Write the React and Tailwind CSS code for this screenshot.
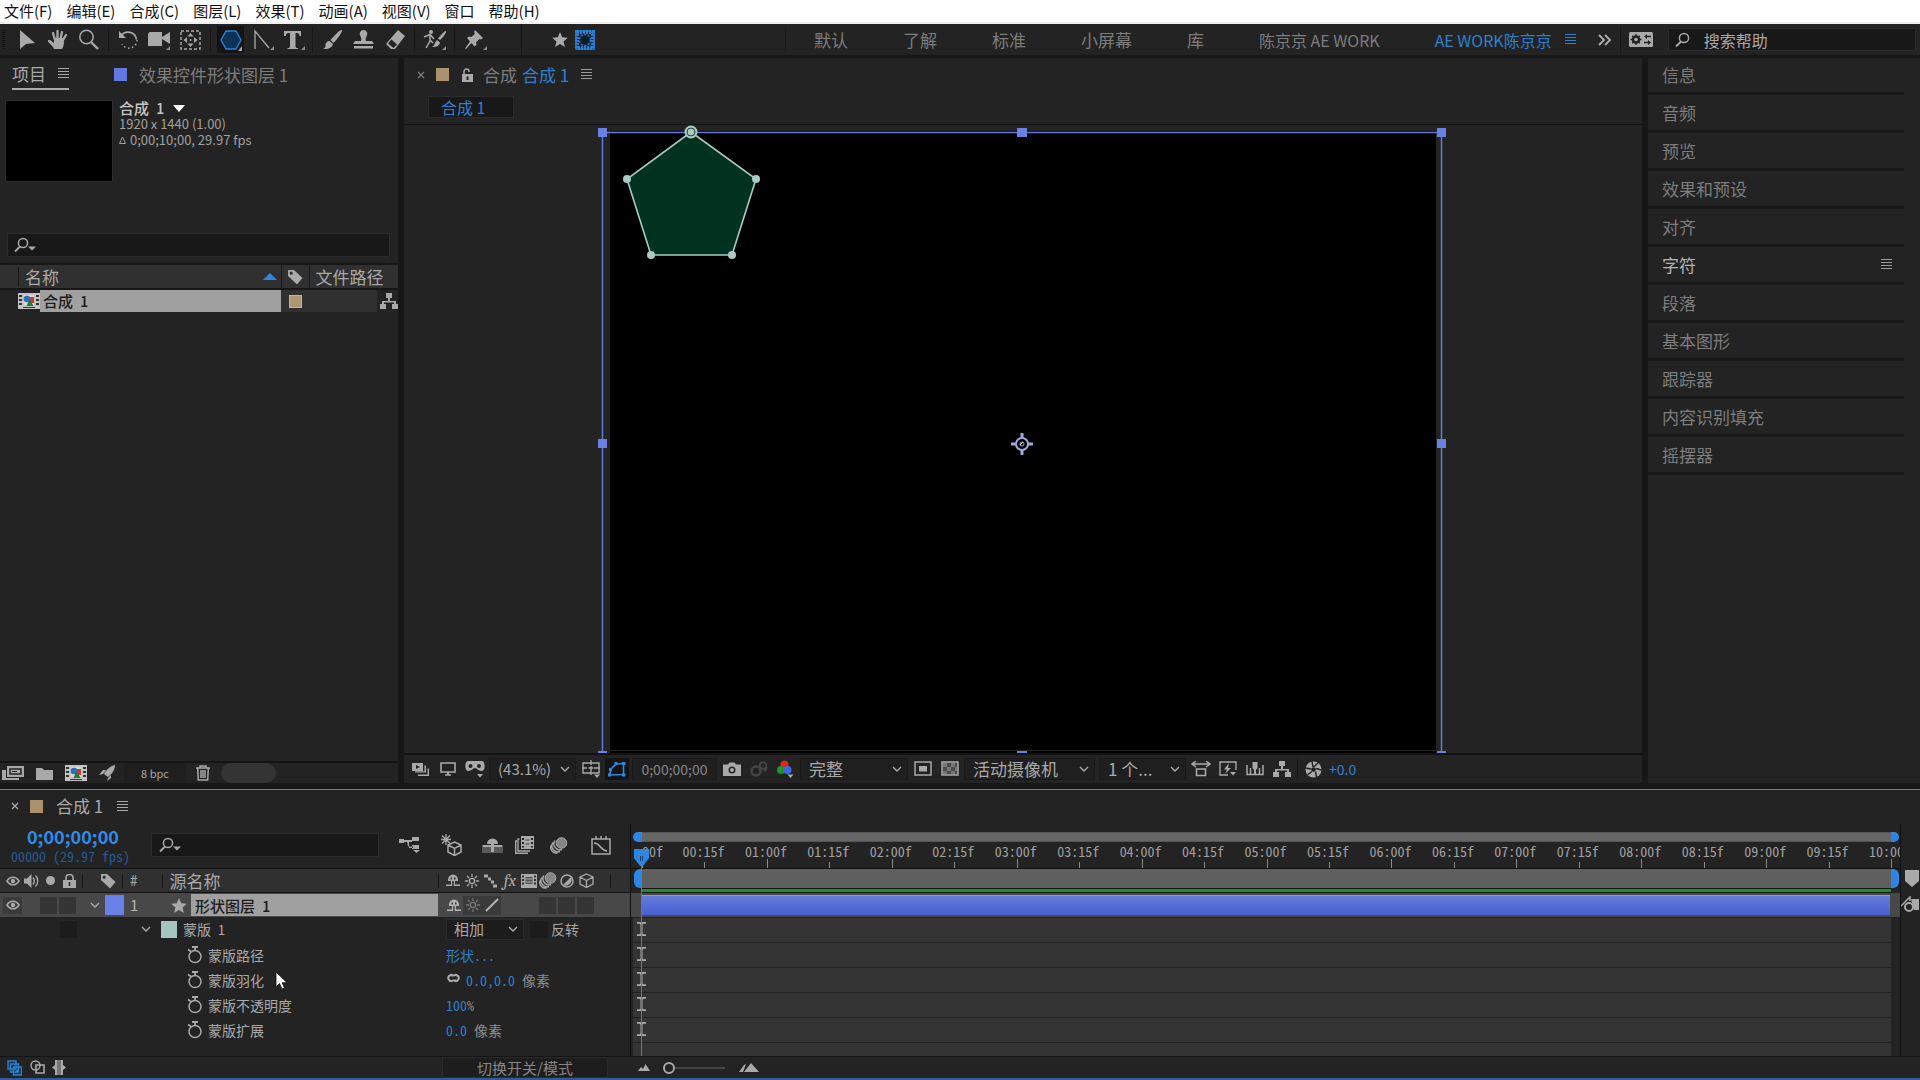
import { Fragment, useState } from 'react';

const menus = ['文件(F)', '编辑(E)', '合成(C)', '图层(L)', '效果(T)', '动画(A)', '视图(V)', '窗口', '帮助(H)'];
const workspaces = ['默认', '了解', '标准', '小屏幕', '库', '陈京京 AE WORK', 'AE WORK陈京京'];
const sidePanels = ['信息', '音频', '预览', '效果和预设', '对齐', '字符', '段落', '基本图形', '跟踪器', '内容识别填充', '摇摆器'];

const half = "[font-feature-settings:'hwid']";

const Svg = ({ w, h, children, className = '' }) => (
    <svg width={w} height={h} viewBox={`0 0 ${w} ${h}`} fill="currentColor" className={`shrink-0 ${className}`} aria-hidden="true">
        {children}
    </svg>
);

/* ---------- shared icons ---------- */

const Burger = ({ className }) => (
    <Svg w={11} h={11} className={className}><path d="M0 .5h11M0 3.500h11M0 6.500h11M0 9.500h11" stroke="currentColor" strokeWidth="1" /></Svg>
);
const Chevron = () => (
    <Svg w={10} h={7}><path d="M1 1l4 4 4-4" fill="none" stroke="currentColor" strokeWidth="1.4" /></Svg>
);
const Lens = ({ caret }) => (
    <Svg w={22} h={16}>
        <circle cx="9" cy="6" r="4.6" fill="none" stroke="currentColor" strokeWidth="1.5" />
        <path d="M6 9.5L1 14.5" stroke="currentColor" strokeWidth="1.8" />
        {caret && <path d="M14 9.500h8l-4 4z" />}
    </Svg>
);
const TagIcon = () => (
    <Svg w={16} h={16}><path fillRule="evenodd" d="M1 1h6l8.500 8-5.500 6.500L1 7zM4.200 2.600a1.600 1.600 0 100 3.200 1.600 1.600 0 000-3.200z" /></Svg>
);
const EyeIcon = () => (
    <Svg w={14} h={10}>
        <path d="M1 5c3-5 9-5 12 0-3 5-9 5-12 0z" fill="none" stroke="currentColor" strokeWidth="1.600" /><circle cx="7" cy="5" r="2.200" />
    </Svg>
);
const StarIcon = () => (
    <Svg w={16} h={15}><path d="M8 0l2.200 5.300 5.600.4-4.300 3.700 1.400 5.600L8 12l-4.900 3 1.400-5.600L.2 5.700l5.600-.4z" /></Svg>
);
const ShyIcon = () => (
    <Svg w={14} h={13}>
        <path d="M2 6a5 5.500 0 0110 0v1H9v3.500h5V12H7.800V7H6.200v5H0v-1.500h5V7H2z" /><path d="M4.500 3.500h1.500v2H4.500zM8 3.500h1.500v2H8z" fill="#303030" />
    </Svg>
);
const SunIcon = () => (
    <Svg w={14} h={14}>
        <circle cx="7" cy="7" r="2.600" fill="none" stroke="currentColor" strokeWidth="1.400" />
        <path d="M7 0v3M7 11v3M0 7h3M11 7h3M2 2l2 2M10 10l2 2M2 12l2-2M10 4l2-2" stroke="currentColor" strokeWidth="1.300" />
    </Svg>
);
const FilmIcon = () => (
    <Svg w={16} h={14}>
        <path fillRule="evenodd" d="M0 0h16v14H0zM1 1.500v2h2v-2zM1 5v2h2V5zM1 8.500v2h2v-2zM13 1.500v2h2v-2zM13 5v2h2V5zM13 8.500v2h2v-2z" />
        <path d="M4.500 3h7v7h-7z" fill="#555" /><path d="M5 5h6M5 8h6" stroke="currentColor" />
    </Svg>
);
const BlurIcon = () => (
    <Svg w={18} h={17}>
        <circle cx="11.500" cy="6" r="5.300" fill="#858585" stroke="currentColor" />
        <path d="M5 3.500a6 6 0 007 9M3 5.500a6 6 0 007 9M1.500 8a5.500 5.500 0 006 8" fill="none" stroke="currentColor" strokeWidth="1.400" />
    </Svg>
);
const CubeIcon = () => (
    <Svg w={15} h={15}><path d="M7.500 1L14 4v7l-6.500 3.500L1 11V4zM1 4l6.500 3.500L14 4M7.500 7.500v7" fill="none" stroke="currentColor" strokeWidth="1.300" /></Svg>
);
const TreeIcon = () => (
    <Svg w={18} h={17}><path d="M6 0h6v5h-2v3h6v3h2v5h-6v-5h2V9.500H4V11h2v5H0v-5h2V8h6V5H6z" /></Svg>
);
const StopWatch = () => (
    <Svg w={16} h={18}>
        <circle cx="8" cy="10.500" r="6" fill="none" stroke="currentColor" strokeWidth="1.500" />
        <path d="M5 1h6M8 1v3M1 3.500l3 2" stroke="currentColor" strokeWidth="1.800" />
    </Svg>
);
const CompIcon = () => (
    <Svg w={22} h={16}>
        <path d="M0 0h22v16H0z" fill="#c4c4c4" />
        <path d="M1 2h3v2H1zM1 6h3v2H1zM1 10h3v2H1zM18 2h3v2h-3zM18 6h3v2h-3zM18 10h3v2h-3zM5 14h12v1H5z" fill="#333" />
        <path d="M6 2h10v10H6z" fill="#d8d8d8" />
        <path d="M11 4h5v6h-5z" fill="#c33c35" /><circle cx="9" cy="6" r="3.300" fill="#2a6fc0" /><path d="M11.500 6l4 7h-7z" fill="#257b3b" />
    </Svg>
);

/* ---------- tool bar ---------- */

const corner = <path d="M22 18v4h-4z" fill="#8d8d8d" />;
const tools = [
    [
        ['选取工具', <path d="M5 2v19l6-5 9-1z" />],
        ['手形工具', <><path d="M8 21c-1-3-4.500-5.500-6-8l2-1 4 3V10h9l1 5c-.5 3-1 4.500-2 6z" /><path d="M3 13l4 4M9 12L7 5M11.500 11V3M14.500 11l1.500-7M16.500 13L20 7" fill="none" stroke="currentColor" strokeWidth="2.300" strokeLinecap="round" /></>],
        ['缩放工具', <><circle cx="9.500" cy="9" r="6.700" fill="none" stroke="currentColor" strokeWidth="1.500" /><path d="M14 14l7 7" stroke="currentColor" strokeWidth="2.400" /></>],
    ],
    [
        ['旋转工具', <><path d="M4 8a8.500 8.500 0 0115.500 3.500" fill="none" stroke="currentColor" strokeWidth="1.700" /><path d="M2 3v7h7z" /><path d="M20 12a8 8 0 01-15 4" fill="none" stroke="currentColor" strokeWidth="1.500" strokeDasharray="1.500 2.500" /></>],
        ['摄像机工具', <><path d="M0 6l1.500-2H14v5l8-5v12l-8-5v7H0z" />{corner}</>],
        ['锚点工具', <><path d="M2 3h19v18H2z" fill="none" stroke="currentColor" strokeWidth="1.500" strokeDasharray="3 2" /><path d="M11.500 5l3 3.500h-6zM11.500 19l3-3.500h-6zM4.500 12L8 9v6zM18.500 12L15 9v6z" /><circle cx="11.500" cy="12" r="1" /></>],
    ],
    [
        ['多边形工具', <><path d="M7 3h10l5 9-5 9H7l-5-9z" fill="#0d3157" stroke="#2d7fd3" strokeWidth="1.400" /><path d="M23 18v5h-4z" fill="#9ab" /></>],
        ['钢笔工具', <><path d="M5 21V3l14 17" fill="none" stroke="currentColor" strokeWidth="1.300" /><path d="M24 18v4h-4z" fill="#8d8d8d" /></>],
        ['文字工具', <><path d="M3 3h17v5h-1.500c-.3-2.500-1-3-4-3v13c0 1.500.5 2 2.500 2v1H6.500v-1c2 0 2.500-.5 2.500-2V5c-3 0-4 .5-4.300 3H3z" /><path d="M24 18v4h-4z" fill="#8d8d8d" /></>],
    ],
    [
        ['画笔工具', <><path d="M21 2c1 1-5 10-8.500 13L9.500 12C13 8 19 1 21 2z" /><path d="M8.500 13l3.500 3c-1 4-5 5.500-10 5 2-1 2.500-2 2.500-3.500C4.600 14 7 13 8.500 13z" /></>],
        ['仿制图章工具', <path d="M11.500 2a4 4 0 013 6.500c-1 1.500-1 3-.5 4.500h6l2 3H1l2-3h6c.5-1.500.5-3-.5-4.500A4 4 0 0111.500 2zM2 18h19v2.500H2z" />],
        ['橡皮擦工具', <><path d="M15 2l7 6-10 13H8l-5-5z" /><path d="M5 15.500l3.500-4 5.500 5L10.500 20z" fill="#232323" /></>],
    ],
    [
        ['Roto 笔刷工具', <><circle cx="8" cy="4" r="2" /><path d="M1 9l6-2.500 4 4.500M7 7v6l-4 7M7 12l3 3" fill="none" stroke="currentColor" strokeWidth="1.500" /><path d="M23 3c1 .6-3 7-6 9l-2-1.500C17 8 22 2 23 3zM14 12l3 2.500c-1 4-4 5-8 4.500 1.500-1 2.500-2 2.800-4z" /><path d="M23 18v4h-4z" fill="#8d8d8d" /></>],
    ],
    [
        ['人偶位控点工具', <><path d="M12 2l8 8-2 1.500-1.500-.5-3.500 3.500.5 2.500-2 1.500L8.500 15 3 21l-1-.5 5-7L4 10l2-1.500 2.500.5L12 5.500 11 4z" /><path d="M24 18v4h-4z" fill="#8d8d8d" /></>],
    ],
];

const ToolBar = () => (
    <div className="flex h-[34px] items-center border-b-[3px] border-[#171717] bg-[#232323] text-[#a9a9a9]">
        <Svg w={3} h={20} className="ml-[2px] text-[#131313]"><path d="M1.500 0v20" stroke="currentColor" strokeWidth="3" strokeDasharray="1 1" /></Svg>
        <div className="flex items-center pl-[6px]">
            {tools.map((group, gi) => (
                <Fragment key={gi}>
                    {gi > 0 && <span className="mx-1 h-[25px] w-px bg-[#181818]" />}
                    {group.map(([label, icon]) => (
                        <button
                            key={label}
                            type="button"
                            aria-label={label}
                            className={label === '多边形工具' ? 'flex h-[27px] w-[31px] items-center justify-center border-x-2 border-[#232323] bg-[#141414]' : 'flex h-[27px] w-[31px] items-center justify-center'}
                        >
                            <Svg w={24} h={24}>{icon}</Svg>
                        </button>
                    ))}
                </Fragment>
            ))}
        </div>
        <span className="ml-[31px] mr-[25px] h-[31px] w-px bg-[#181818]" />
        <button type="button" aria-label="工具创建形状" className="flex w-[26px] justify-center"><StarIcon /></button>
        <button type="button" aria-label="工具创建蒙版" className="flex w-[23px] justify-center">
            <Svg w={20} h={20}>
                <path d="M0 0h20v20H0z" fill="#0b2238" />
                <path d="M2 2h16v16H2z" fill="none" stroke="#2d7fd3" strokeWidth="4" strokeDasharray="2 1" />
                <path d="M1 1h18v18H1z" fill="none" stroke="#2d7fd3" strokeWidth="1.500" />
                <circle cx="10" cy="10" r="5.500" fill="#101c28" stroke="#2d7fd3" strokeWidth="1.500" strokeDasharray="2 1.500" />
            </Svg>
        </button>
        <span className="ml-[189px] h-[25px] w-px bg-[#1b1b1b]" />
        <nav className="flex items-center gap-[55px] whitespace-nowrap pl-7 text-[17px] text-[#7d7d7d]">
            {workspaces.map((name, i) => (
                <a key={name} href="#" className={i === 6 ? 'text-base text-[#2f80cf]' : i === 5 ? 'text-base' : ''}>{name}</a>
            ))}
        </nav>
        <Burger className="ml-[13px] text-[#2f80cf]" />
        <Svg w={14} h={12} className="ml-[22px]"><path d="M1 1l5 5-5 5M7 1l5 5-5 5" fill="none" stroke="currentColor" strokeWidth="2" /></Svg>
        <span className="mx-2 h-[28px] w-px bg-[#181818]" />
        <button type="button" aria-label="同步设置">
            <Svg w={24} h={15}>
                <rect width="24" height="15" rx="1.500" />
                <circle cx="7" cy="7.500" r="3.200" fill="none" stroke="#222" strokeWidth="2.200" />
                <path d="M7 2v11M1.500 7.500h11M3.200 3.700l7.600 7.600M3.200 11.300l7.600-7.600" stroke="#222" strokeWidth="1.300" /><circle cx="7" cy="7.500" r="1.800" />
                <path d="M15 4.500l3-2.500v1.700h4v1.600h-4V7zM22 10.500L19 8v1.700h-4v1.600h4V13z" fill="#222" />
            </Svg>
        </button>
        <label className="ml-[15px] mr-1 flex h-[23px] min-w-0 flex-1 items-center border border-[#2b2b2b] bg-[#181818] pl-[6px]">
            <Lens />
            <input type="text" aria-label="搜索帮助" placeholder="搜索帮助" className="ml-[7px] w-full min-w-0 bg-transparent text-base leading-5 outline-none placeholder:text-[#a9a9a9]" />
        </label>
    </div>
);

/* ---------- project panel ---------- */

const Swatch = ({ className }) => <span className={`h-[13px] w-[13px] shrink-0 ${className}`} />;

const ProjectPanel = () => (
    <section className="flex w-[398px] shrink-0 flex-col bg-[#232323]">
        <div className="flex h-8 items-stretch pl-3 text-[17px] leading-[33px]">
            <button type="button" className="flex items-center gap-3 border-b-2 border-[#a9a9a9] text-[#a9a9a9]">项目 <Burger /></button>
            <button type="button" className="ml-[45px] flex items-center text-[#7d7d7d]"><Swatch className="mr-3 bg-[#6179e0]" />效果控件形状图层 1</button>
        </div>
        <div className="flex h-[143px] gap-[6px] pl-[5px] pt-[10px]">
            <div className="h-[82px] w-[108px] border border-[#2e2e2e] bg-black" />
            <div className="text-[13px] leading-4 text-[#a0a0a0]">
                <div className={`flex h-4 items-center gap-[9px] text-[15px] font-medium leading-4 text-[#c4c4c4] ${half}`}>
                    合成 1 <Svg w={12} h={7} className="text-white"><path d="M0 0h12L6 7z" /></Svg>
                </div>
                <div>1920 x 1440 (1.00)</div>
                <div className="flex items-center gap-1">
                    <Svg w={7} h={8}><path d="M3.500 1L6.500 7.500h-6z" fill="none" stroke="currentColor" /></Svg>0;00;10;00, 29.97 fps
                </div>
            </div>
        </div>
        <label className="ml-[7px] mr-2 flex h-6 items-center border border-[#2c2c2c] bg-[#181818] pl-[6px] text-[#a9a9a9]">
            <Lens caret />
            <input type="text" aria-label="搜索项目" className="w-full bg-transparent outline-none" />
        </label>
        <table className="mt-[6px] w-full table-fixed border-collapse text-left">
            <thead>
                <tr className="h-[25px] border-y-2 border-[#171717] bg-[#303030] text-[17px] leading-5 text-[#a9a9a9]">
                    <th className="w-[281px] border-r border-[#181818] p-0 font-normal">
                        <div className="ml-[18px] flex items-center justify-between border-l border-[#181818] pl-[6px] pr-1">
                            名称 <Svg w={14} h={7} className="text-[#2d87e2]"><path d="M0 7h14L7 0z" /></Svg>
                        </div>
                    </th>
                    <th className="w-[28px] border-r border-[#181818] p-0"><span className="flex justify-center"><TagIcon /></span></th>
                    <th className="p-0 pl-[6px] font-normal">文件路径</th>
                </tr>
            </thead>
            <tbody>
                <tr className="h-[22px]">
                    <td className="p-0">
                        <div className="flex h-[22px] items-center pl-[18px]">
                            <CompIcon />
                            <span className={`h-[22px] flex-1 bg-[#a0a0a0] pl-[3px] text-[15px] font-medium leading-[22px] text-[#1d1d1d] ${half}`}>合成 1</span>
                        </div>
                    </td>
                    <td className="bg-[#303030] p-0"><Swatch className="mx-auto block border border-[#c5b48c] bg-[#ab9775]" /></td>
                    <td className="p-0 text-[#a9a9a9]">
                        <div className="flex h-[22px] items-center gap-[3px]"><span className="h-[22px] flex-1 bg-[#303030]" /><TreeIcon /></div>
                    </td>
                </tr>
            </tbody>
        </table>
        <div className="mt-auto flex h-[22px] items-center border-t-2 border-[#151515] pl-px text-[#a9a9a9]">
            <button type="button" aria-label="解释素材"><Svg w={23} h={15}><path d="M6 0h17v11H6zM1 4h4v8h13v2H1z" /><path d="M9 3h11v5H9z" fill="none" stroke="#232323" strokeWidth="1.500" /><path d="M11 5.500h5" stroke="#232323" /></Svg></button>
            <button type="button" aria-label="新建文件夹" className="ml-3"><Svg w={17} h={13}><path d="M0 1h6l2 2h9v10H0z" /></Svg></button>
            <button type="button" aria-label="新建合成" className="ml-3"><CompIcon /></button>
            <button type="button" aria-label="项目设置" className="ml-3"><Svg w={17} h={16}><path d="M16 0c0 5-3 9-7 12l-4-3C7 5 11 1 16 0zM4 9l-4 1 4-5h3zM9 13l-1 3 4-3v-3z" /></Svg></button>
            <button type="button" className="ml-2 h-5 w-[62px] bg-[#1f1f1f] text-center text-[11px] leading-5">8 bpc</button>
            <button type="button" aria-label="删除" className="ml-[10px]"><Svg w={14} h={16}><path d="M0 3h14M4 3V1h6v2M1.700 3l.6 12h9.400l.6-12M5 5v8M7 5v8M9 5v8" fill="none" stroke="currentColor" strokeWidth="1.500" /></Svg></button>
            <span className="ml-[11px] h-5 w-[55px] rounded-full bg-[#343434]" />
        </div>
    </section>
);

/* ---------- composition viewer ---------- */

const Viewer = () => (
    <div className="flex min-h-0 flex-1 justify-center overflow-hidden border-b-2 border-[#121212] bg-[#232323]">
        <svg width="860" height="960" viewBox="593 125 860 960" className="shrink-0" role="img" aria-label="合成 1">
            <path d="M610 131h826v700H610z" fill="#000" />
            <path d="M602.500 132.500H1441.500V760H602.500z" fill="none" stroke="#6179d8" strokeWidth="1.500" />
            <path d="M691 132l65 47-24 76h-81l-24-76z" fill="#00331f" stroke="#a9cbc3" strokeWidth="1.600" />
            <g fill="#a9cbc3">
                <circle cx="756" cy="179" r="4" /><circle cx="732" cy="255" r="4" /><circle cx="651" cy="255" r="4" /><circle cx="627" cy="179" r="4" />
                <circle cx="691" cy="132" r="6.500" /><circle cx="691" cy="132" r="4" stroke="#27413c" />
            </g>
            <g fill="#6a80e2">
                <path d="M598 128h9v9h-9zM1017 128h10v9h-10zM1437 128h9v9h-9zM598 439h9v9h-9zM1437 439h9v9h-9z" />
                <path d="M598 751h9v9h-9zM1017 751h10v9h-10zM1437 751h9v9h-9z" />
            </g>
            <path d="M610 750.500h826" stroke="#232323" strokeWidth="1" />
            <g stroke="#a5a7dc" fill="none">
                <circle cx="1022" cy="444" r="6" strokeWidth="2" /><circle cx="1022" cy="444" r="2" strokeWidth="1" />
                <path d="M1022 433v6M1022 449v6M1011 444h6M1027 444h6" strokeWidth="3" />
            </g>
            <path d="M1020 445l3-3" stroke="#ddd" />
        </svg>
    </div>
);

const FootBtn = ({ label, children }) => (
    <button type="button" aria-label={label} className="flex w-[27px] shrink-0 items-center justify-center">{children}</button>
);
const FootSelect = ({ label, value, className }) => (
    <div className={`relative mx-px flex h-[22px] shrink-0 items-center border border-[#191919] bg-[#1f1f1f] ${className}`}>
        <select aria-label={label} className="h-full w-full appearance-none pl-2 leading-5 outline-none"><option>{value}</option></select>
        <span className="pointer-events-none absolute right-[5px]"><Chevron /></span>
    </div>
);

const CompPanel = () => (
    <section className="flex min-w-0 flex-1 flex-col bg-[#232323]">
        <div className="flex h-8 items-center pl-[13px] pt-px text-[17px] text-[#7d7d7d]">
            <Svg w={8} h={8}><path d="M1 1l6 6M7 1L1 7" stroke="currentColor" strokeWidth="1.300" /></Svg>
            <Swatch className="ml-[11px] bg-[#a9936f]" />
            <Svg w={13} h={14} className="ml-3 text-[#a9a9a9]"><path fillRule="evenodd" d="M1 6h11v8H1zM5.500 8.500h2V12h-2z" /><path d="M3 6V3.500a2.500 2.500 0 015 0V4" fill="none" stroke="currentColor" strokeWidth="1.500" /></Svg>
            <span className="ml-[9px]">合成</span>
            <a href="#" className="ml-[5px] text-[#2f80cf]">合成 1</a>
            <Burger className="ml-3 text-[#9a9a9a]" />
        </div>
        <div className="flex h-[35px] items-center border-b border-[#121212] pl-6">
            <button type="button" className="h-[22px] w-[86px] border border-[#2b2b2b] bg-[#181818] pl-3 text-left text-base leading-5 text-[#2f80cf]">合成 1</button>
        </div>
        <Viewer />
        <div className="flex h-7 items-center overflow-hidden pl-[3px] text-[#a9a9a9]">
            <FootBtn label="始终预览此视图"><Svg w={17} h={14}><path fillRule="evenodd" d="M0 1h11v8H0zM4 3v4l4-2zM12.500 3.500h1.500v7H3v-1.300h9.500zM15.500 6.500H17V14H6v-1.500h9.500z" /></Svg></FootBtn>
            <FootBtn label="主查看器"><Svg w={16} h={14}><path d="M1 1h14v9H1zM5 13h6" fill="none" stroke="currentColor" strokeWidth="1.600" /><path d="M7 10h2v3H7z" /></Svg></FootBtn>
            <FootBtn label="切换 3D 视图"><Svg w={20} h={18}><path fillRule="evenodd" d="M3 1h14c3 0 4 9 0 10-4 0-5-3-7-3s-3 3-7 3C-1 10 0 1 3 1zM5.500 4a2 2 0 100 4 2 2 0 000-4zM14 4a2 2 0 100 4 2 2 0 000-4zM12 14h6l-3 3.500z" /></Svg></FootBtn>
            <FootSelect label="放大率" value="(43.1%)" className="w-[87px] text-[15px]" />
            <FootBtn label="网格和参考线"><Svg w={18} h={18}><path d="M1 3h16v10H1z" fill="none" stroke="currentColor" strokeWidth="1.400" /><path d="M9 0v5M9 10v5M0 8h5M12 8h6M6.500 8h5M9 6v4" stroke="currentColor" strokeWidth="1.300" /><path d="M12 14.500h6l-3 3.500z" /></Svg></FootBtn>
            <button type="button" aria-label="切换蒙版路径可见性" className="ml-px mr-[3px] flex h-[22px] w-6 shrink-0 items-center justify-center bg-[#141414] text-[#2f86df]">
                <Svg w={18} h={16}><path d="M1.500 14L3 8l5-5 7.500-.5v11z" fill="none" stroke="currentColor" strokeWidth="1.600" /><path d="M0 12.500h3v3H0zM14 12.500h3.500v3H14zM14 1h3.500v3H14zM6.500 1h3v3h-3zM1 7h3v3H1z" /></Svg>
            </button>
            <button type="button" className="mr-px h-[22px] w-[85px] shrink-0 border border-[#191919] bg-[#1f1f1f] text-center text-sm leading-5 text-[#868686]">0;00;00;00</button>
            <FootBtn label="拍摄快照"><Svg w={18} h={14}><path fillRule="evenodd" d="M0 2.500h5l1.500-2h5l1.500 2h5V14H0zM9 4.500a3.500 3.500 0 100 7 3.500 3.500 0 000-7z" /><circle cx="9" cy="8" r="2" /></Svg></FootBtn>
            <FootBtn label="显示快照"><Svg w={20} h={16} className="text-[#454545]"><circle cx="7" cy="10" r="4.500" fill="none" stroke="currentColor" strokeWidth="2.500" /><circle cx="14" cy="4.500" r="3.300" fill="none" stroke="currentColor" strokeWidth="2" /><path d="M14 9l5-3-2 5z" /></Svg></FootBtn>
            <FootBtn label="显示通道"><Svg w={17} h={18}><circle cx="7.500" cy="4.500" r="4" fill="#de2520" /><circle cx="4" cy="10" r="4" fill="#1f961f" /><circle cx="10.500" cy="10" r="4" fill="#3a6ce0" /><path d="M10.500 14.500h6l-3 3.500z" /></Svg></FootBtn>
            <FootSelect label="分辨率" value="完整" className="w-[108px] text-[17px]" />
            <FootBtn label="目标区域"><Svg w={18} h={16}><path d="M1 1h16v13H1z" fill="none" stroke="currentColor" strokeWidth="1.500" /><path d="M5 5h8v5.500H5z" /></Svg></FootBtn>
            <FootBtn label="切换透明网格"><Svg w={18} h={16}><path d="M1 1h16v13H1z" fill="#4a4a4a" stroke="currentColor" strokeWidth="1.500" /><path d="M2 2h4v4H2zM10 2h4v4h-4zM6 6h4v4H6zM14 6h2v4h-2zM2 10h4v3H2zM10 10h4v3h-4z" fill="#777" /></Svg></FootBtn>
            <FootSelect label="3D 视图" value="活动摄像机" className="w-[131px] text-[17px]" />
            <span className="w-[2px]" />
            <FootSelect label="视图布局" value="1 个..." className="w-[87px] text-[17px]" />
            <FootBtn label="像素长宽比校正"><Svg w={20} h={16}><path d="M2 3h16M5 0L1 3l4 3M15 0l4 3-4 3" fill="none" stroke="currentColor" strokeWidth="1.500" /><path d="M5.500 8h9v6.500h-9z" fill="none" stroke="currentColor" strokeWidth="1.600" /></Svg></FootBtn>
            <FootBtn label="快速预览"><Svg w={18} h={17}><path d="M17 9V1H1v13h8" fill="none" stroke="currentColor" strokeWidth="1.400" /><path d="M10 2L5 8.500h3L6 13l6-6H9zM11 11h6l-3 3.500z" /></Svg></FootBtn>
            <FootBtn label="时间轴"><Svg w={18} h={14}><path d="M1 3v9.500h16V3M4.500 6v6M13.500 6v6" fill="none" stroke="currentColor" strokeWidth="1.500" /><path d="M6.500 0h5v6l-1.500 2v4H8V8L6.500 6z" /></Svg></FootBtn>
            <FootBtn label="合成流程图"><TreeIcon /></FootBtn>
            <span className="mx-[2px] h-[22px] w-px bg-[#1a1a1a]" />
            <FootBtn label="重置曝光度"><Svg w={17} h={17}><circle cx="8.500" cy="8.500" r="8" /><circle cx="8.500" cy="8.500" r="2.300" fill="#232323" /><path d="M8.500 6L13 2M11 7.500l5.500 1.500M10.500 10.500l1 5.500M7 10.500L2.500 14M6 8L.5 7M8 6L7 .5" stroke="#232323" strokeWidth="1.400" /></Svg></FootBtn>
            <a href="#" className="ml-[2px] text-sm text-[#2f80cf]">+0.0</a>
        </div>
    </section>
);

const SidePanels = () => (
    <aside className="w-[272px] shrink-0 bg-[#232323] pr-4">
        {sidePanels.map((name, i) => (
            <button
                key={name}
                type="button"
                className={`flex w-full items-center justify-between border-b-[3px] border-[#171717] pl-[14px] pr-3 text-[17px] ${i === 0 ? 'h-[37px]' : 'h-[38px]'} ${name === '字符' ? 'text-[#b4b4b4]' : 'text-[#7d7d7d]'}`}
            >
                {name}
                {name === '字符' && <Burger className="text-[#9a9a9a]" />}
            </button>
        ))}
    </aside>
);

/* ---------- timeline ---------- */

const Cell = ({ children, className = '' }) => <span className={`flex w-[19px] shrink-0 justify-center ${className}`}>{children}</span>;
const Sep = ({ className }) => <span className={`h-[14px] w-px shrink-0 bg-[#161616] ${className}`} />;
const Box = ({ dark }) => <span className={dark ? 'mr-[2px] h-[17px] w-[17px] shrink-0 bg-[#1c1c1c]' : 'mr-[2px] h-[17px] w-[17px] shrink-0 bg-[#353535]'} />;

const properties = [
    { name: '蒙版路径', value: '形状...' },
    { name: '蒙版羽化', value: '0.0,0.0', unit: ' 像素', linked: true },
    { name: '蒙版不透明度', value: '100', unit: '%' },
    { name: '蒙版扩展', value: '0.0', unit: ' 像素' },
];

const LayerHeader = () => (
    <div className="flex h-[25px] items-center border-y border-[#121212] bg-[#303030] pl-[3px] text-[#a9a9a9]">
        <Cell><EyeIcon /></Cell>
        <Cell><Svg w={15} h={14}><path d="M0 4.500h3L7.500 0v14L3 9.500H0z" /><path d="M9 3.500c1.500 2 1.500 5 0 7M11.500 1.500c3 3 3 8 0 11" fill="none" stroke="currentColor" strokeWidth="1.400" /></Svg></Cell>
        <Cell><Svg w={9} h={9}><circle cx="4.500" cy="4.500" r="4.500" /></Svg></Cell>
        <Cell><Svg w={13} h={14}><path fillRule="evenodd" d="M0 6h13v8H0zM5.700 8v4h1.600V8z" /><path d="M3 6V3.500a3.500 3 0 017 0V6" fill="none" stroke="currentColor" strokeWidth="1.600" /></Svg></Cell>
        <Sep className="ml-[3px]" />
        <span className="ml-[17px]"><TagIcon /></span>
        <Sep className="ml-[6px]" />
        <span className={`ml-[7px] text-[15px] ${half}`}>#</span>
        <Sep className="ml-[24px]" />
        <span className="w-[275px] pl-[7px] text-[17px] leading-5">源名称</span>
        <Sep className="mr-[5px]" />
        <Cell><ShyIcon /></Cell>
        <Cell><SunIcon /></Cell>
        <Cell><Svg w={14} h={14}><path d="M0 2h4M4 5h3M7 8h3M9 12h4" stroke="currentColor" strokeWidth="3" /></Svg></Cell>
        <Cell><span className="font-serif text-[17px] italic leading-5">fx</span></Cell>
        <Cell><FilmIcon /></Cell>
        <Cell><BlurIcon /></Cell>
        <Cell><Svg w={14} h={14}><circle cx="7" cy="7" r="6" fill="none" stroke="currentColor" strokeWidth="1.500" /><path d="M11 3a6 6 0 01-8 8z" /></Svg></Cell>
        <Cell><CubeIcon /></Cell>
        <Sep className="ml-[14px]" />
    </div>
);

const LayerRow = () => (
    <div className="flex h-6 items-center bg-[#484848] pl-[3px] text-[#a9a9a9]">
        <Cell className="h-[17px] items-center bg-[#3a3a3a]"><EyeIcon /></Cell>
        <span className="w-[18px]" /><Box /><Box />
        <span className="ml-3"><Chevron /></span>
        <span className="ml-[5px] h-5 w-[19px] bg-[#6880e8]" />
        <span className="w-[47px] pl-[6px] text-[15px] text-[#b5b5b5]">1</span>
        <StarIcon />
        <span className={`ml-1 h-[22px] w-[247px] bg-[#a0a0a0] pl-1 text-[15px] font-medium leading-[23px] text-[#1d1d1d] ${half}`}>形状图层 1</span>
        <span className="w-[6px]" />
        <Cell className="h-[19px] items-center text-[#b5b5b5]"><ShyIcon /></Cell>
        <Cell className="h-[19px] items-center bg-[#3a3a3a] text-[#777]"><SunIcon /></Cell>
        <Cell className="h-[19px] items-center bg-[#3a3a3a] text-[#b5b5b5]"><Svg w={14} h={14}><path d="M1 13L13 1" stroke="currentColor" strokeWidth="2" /></Svg></Cell>
        <span className="w-[38px]" /><Box /><Box /><Box />
    </div>
);

const MaskRow = () => {
    const [inverted, setInverted] = useState(false);

    return (
        <div className={`flex h-[25px] items-center pb-px text-sm text-[#a9a9a9] ${half}`}>
            <span className="w-[60px]" /><Box dark />
            <span className="ml-[62px]"><Chevron /></span>
            <span className="ml-[10px] h-[17px] w-4 bg-[#a6c5c0]" />
            <span className="w-[269px] pl-[6px]">蒙版 1</span>
            <div className="relative flex h-[21px] w-[78px] items-center border border-[#2b2b2b] bg-[#1c1c1c]">
                <select aria-label="蒙版模式" className="w-full appearance-none pl-[7px] text-[15px] leading-[18px] outline-none"><option>相加</option></select>
                <span className="pointer-events-none absolute right-[5px]"><Chevron /></span>
            </div>
            <label className="ml-[6px] flex items-center gap-[3px]">
                <input
                    type="checkbox"
                    checked={inverted}
                    onChange={(e) => setInverted(e.target.checked)}
                    className="h-[17px] w-[18px] appearance-none bg-[#1c1c1c] checked:bg-[#a9a9a9]"
                />
                反转
            </label>
        </div>
    );
};

const PropertyRow = ({ name, value, unit, linked }) => (
    <div className={`relative flex h-[25px] items-center whitespace-pre pl-[187px] text-sm text-[#a9a9a9] ${half}`}>
        <button type="button" aria-label={`${name} 秒表`}><StopWatch /></button>
        <span className="w-[243px] pl-[5px]">{name}</span>
        {linked && (
            <Svg w={15} h={10} className="mb-1 mr-[5px]"><path d="M7 2.500a3 3 0 100 5h3M8 7.500a3 3 0 100-5H5" fill="none" stroke="currentColor" strokeWidth="2" /></Svg>
        )}
        <a href="#" className="text-[#2f80cf]">{value}</a>
        <span className="text-[#8d8d8d]">{unit}</span>
        {linked && (
            <Svg w={14} h={21} className="absolute left-[275px] top-[4px]"><path d="M1 1v15l3.500-3.500L7 18l2.500-1-2.400-5.300H12z" fill="#fff" stroke="#111" strokeWidth=".8" /></Svg>
        )}
    </div>
);

const times = Array.from({ length: 21 }, (_, i) => {
    const sec = String(Math.floor(i / 2)).padStart(2, '0');
    return i === 0 ? '00f' : `${sec}:${i % 2 ? '15' : '00'}f`;
});

const Ruler = () => (
    <div className="flex h-[26px] overflow-hidden pl-[11px] pr-[9px]">
        {times.map((time, i) => (
            <div key={time} className={`flex flex-col ${i === 20 ? 'w-0' : 'min-w-0 flex-1'}`}>
                <span className={`h-4 whitespace-nowrap text-sm leading-[18px] text-[#a0a0a0] ${half} ${i === 0 ? '' : '-ml-[22px]'}`}>{time}</span>
                <span className={`mt-auto w-px bg-[#8a8a8a] ${i % 2 ? 'h-[6px]' : 'h-[9px]'}`} />
            </div>
        ))}
    </div>
);

const Tracks = () => (
    <div className="relative flex min-w-0 flex-1 flex-col border-l border-[#111]">
        <div className="mt-2 flex h-[10px] pl-[2px]">
            <span className="w-[9px] rounded-l-full bg-[#2d87e2]" />
            <span className="flex-1 border-y border-[#555] bg-[#666]" />
            <span className="w-2 rounded-r-full bg-[#2d87e2]" />
            <span className="w-px" />
        </div>
        <Ruler />
        <div className="flex h-5 border-t border-[#0f0f0f] pl-[3px]">
            <span className="w-2 rounded-l-md bg-[#2d87e2]" />
            <span className="flex-1 bg-[#5f5f5f]" />
            <span className="w-2 rounded-r-md bg-[#2d87e2]" />
            <span className="w-px" />
        </div>
        <div className="ml-[11px] mr-[9px] h-[5px] border-y border-[#0f160f] bg-[#24883a]" />
        <div className="h-6 bg-[#484848] py-[2px] pl-[11px] pr-[10px]">
            <div className="h-full border-t border-[#8c99d2] bg-gradient-to-b from-[#667cd8] to-[#4560d0]" />
        </div>
        <div className="ml-[2px] mr-[9px] flex flex-1 flex-col bg-[#343434]">
            {['mask', ...properties.map((p) => p.name)].map((id) => (
                <div key={id} className="flex h-[25px] items-center border-t border-[#212121] pb-[3px] pl-1 text-[#a9a9a9]">
                    <Svg w={9} h={14}><path d="M0 .8h3l1.500 1.500L6 .8h3M0 13.200h3l1.500-1.500L6 13.200h3M4.500 2v10" fill="none" stroke="currentColor" strokeWidth="2" /></Svg>
                </div>
            ))}
            <div className="h-[14px] border-t border-[#212121]" />
        </div>
        {/* current time indicator */}
        <div className="absolute bottom-0 left-[3px] top-[25px] flex w-[15px] flex-col items-center">
            <Svg w={15} h={17} className="text-[#2d87e2]"><path d="M0 0h15v9l-6 8H6L0 9z" /><path d="M6.500 7v5M8.500 7v5" stroke="#15406e" /></Svg>
            <span className="w-px flex-1 bg-[#2d87e2]" />
        </div>
    </div>
);

const Timeline = () => (
    <section className="shrink-0 border-t border-b-2 border-t-[#4a80c4] border-b-[#2c5c9c] bg-[#232323]">
        <div className="flex h-[34px] items-center pb-[2px] pl-[11px] text-[17px] text-[#a9a9a9]">
            <Svg w={8} h={8}><path d="M1 1l6 6M7 1L1 7" stroke="currentColor" strokeWidth="1.300" /></Svg>
            <Swatch className="ml-[11px] bg-[#a9936f]" />
            <span className="ml-[13px]">合成 1</span>
            <Burger className="ml-[14px]" />
        </div>
        <div className="flex">
            <div className="w-[630px] shrink-0">
                <div className="flex h-[44px] items-start text-[#a9a9a9]">
                    <div className="w-[151px] pl-[11px]">
                        <div className="pl-4 pt-px text-[18px] font-bold leading-[22px] text-[#2f8cea]">0;00;00;00</div>
                        <div className={`text-sm leading-[18px] text-[#235b93] ${half}`}>00000 (29.97 fps)</div>
                    </div>
                    <label className="mt-[9px] flex h-6 w-[228px] items-center border border-[#2c2c2c] bg-[#181818] pl-[7px]">
                        <Lens caret />
                        <input type="text" aria-label="搜索图层" className="w-full min-w-0 bg-transparent outline-none" />
                    </label>
                    <div className="mt-[9px] flex h-6 items-center pl-5">
                        <button type="button" aria-label="合成微型流程图"><Svg w={21} h={16}><path d="M0 2h5v4H0zM13 0h7v4h-7zM13 8h7v4h-7zM14 13h7l-3.500 3zM5 3h8v2H5zM8 4h2v7h4V9.500H9z" /></Svg></button>
                        <button type="button" aria-label="草图 3D" className="ml-5"><Svg w={22} h={22}><path d="M6 0v11M1 5.500h10M2 1.500l8 8M10 1.500l-8 8" stroke="currentColor" strokeWidth="1.300" /><path d="M14.500 8l6.500 3v7l-6.500 3.500L8 18v-7zM8 11l6.500 3.500L21 11M14.500 14.500v7" fill="none" stroke="currentColor" strokeWidth="1.500" /></Svg></button>
                        <button type="button" aria-label="隐藏图层" className="ml-5"><Svg w={21} h={16}><path d="M0 8h21v8H0z" fill="#5a5a5a" /><path d="M5 7a5.500 5.500 0 0111 0zM9 7h3v8H9zM4 8h4v1H4zM1 8h19v2H1z" /></Svg></button>
                        <button type="button" aria-label="帧混合" className="ml-3"><Svg w={19} h={18}><path fillRule="evenodd" d="M6 0h13v13H6zM7 2v2h2V2zM7 6v2h2V6zM7 10v1.500h2V10zM16 2v2h2V2zM16 6v2h2V6zM16 10v1.500h2V10z" /><path d="M4.500 3H3v12h12M2 5H.700v12.300H13" fill="none" stroke="currentColor" strokeWidth="1.400" /><path d="M10.500 4h4M10.500 8h4" stroke="#444" /></Svg></button>
                        <button type="button" aria-label="运动模糊" className="ml-4"><BlurIcon /></button>
                        <button type="button" aria-label="图表编辑器" className="ml-[23px]"><Svg w={20} h={19}><path d="M1 3h18v15H1zM5 0v3M10 0v3M15 0v3" fill="none" stroke="currentColor" strokeWidth="1.500" /><path d="M3 7c7 0 5 7 13 8" fill="none" stroke="currentColor" strokeWidth="1.600" /></Svg></button>
                    </div>
                </div>
                <LayerHeader />
                <LayerRow />
                <MaskRow />
                {properties.map((p) => <PropertyRow key={p.name} {...p} />)}
                <div className="h-[14px]" />
            </div>
            <Tracks />
            <div className="flex w-5 shrink-0 flex-col border-l border-[#111] pt-[45px] text-[#a9a9a9]">
                <Svg w={16} h={19} className="ml-[3px]"><path d="M1 1h14v11l-7 6-7-6z" /></Svg>
                <Svg w={19} h={17} className="mt-2"><path d="M10 3h8v11h-5z" /><circle cx="8" cy="11" r="4" fill="#232323" stroke="currentColor" strokeWidth="2" /><path d="M0 10l9-9v4" fill="none" stroke="currentColor" strokeWidth="1.500" /></Svg>
            </div>
        </div>
        <div className="flex h-[22px] items-center border-t border-[#141414] text-[#a9a9a9]">
            <button type="button" aria-label="展开图层开关" className="ml-[7px] text-[#2f80cf]"><Svg w={15} h={16}><path d="M1 1h8v8H1zM3.500 4h8v8h-8zM6.500 7h8v8h-8z" fill="#173250" stroke="currentColor" strokeWidth="1.400" /><path d="M9 10h3v2H9z" /></Svg></button>
            <button type="button" aria-label="转换控制" className="ml-2"><Svg w={15} h={15}><circle cx="5.500" cy="5.500" r="4.500" fill="none" stroke="currentColor" strokeWidth="1.400" /><path d="M6 5h8v8H6z" fill="none" stroke="currentColor" strokeWidth="1.600" /></Svg></button>
            <button type="button" aria-label="入点出点" className="ml-[7px]"><Svg w={14} h={15}><path d="M4 0h6v15H4z" fill="#777" /><path d="M5 0H3v5L0 7.500 3 10v5h2zM9 0h2v5l3 2.500-3 2.500v5H9z" /></Svg></button>
            <button type="button" className="ml-[376px] h-[21px] w-[166px] border border-[#2b2b2b] bg-[#1d1d1d] text-[15px] leading-[18px] text-[#858585]">切换开关/模式</button>
            <Svg w={12} h={7} className="ml-[30px]"><path d="M0 7l3-4 2 2 2.500-5L12 7z" /></Svg>
            <input
                type="range"
                aria-label="时间缩放"
                min="0"
                max="100"
                defaultValue="0"
                className="ml-[13px] h-3 w-[62px] appearance-none bg-transparent [&::-webkit-slider-runnable-track]:h-[2px] [&::-webkit-slider-runnable-track]:bg-[#444] [&::-webkit-slider-thumb]:mt-[-5px] [&::-webkit-slider-thumb]:h-3 [&::-webkit-slider-thumb]:w-3 [&::-webkit-slider-thumb]:appearance-none [&::-webkit-slider-thumb]:rounded-full [&::-webkit-slider-thumb]:border-2 [&::-webkit-slider-thumb]:border-[#a9a9a9] [&::-webkit-slider-thumb]:bg-[#232323]"
            />
            <Svg w={20} h={9} className="ml-[14px]"><path d="M0 9l5-7 2-1-3 8zM5 9l7-9 8 9z" /></Svg>
        </div>
    </section>
);

export default function App() {
    return (
        <div className="flex h-screen flex-col overflow-hidden bg-[#151817] font-['Noto_Sans_CJK_SC',sans-serif]">
            <nav className="flex h-6 shrink-0 items-center gap-[14px] border-b-2 border-[#f0f0f0] bg-white pl-1 text-[15px] leading-5 text-[#111]">
                {menus.map((m) => <a key={m} href="#" className="whitespace-nowrap">{m}</a>)}
            </nav>
            <ToolBar />
            <main className="mb-[6px] flex min-h-0 flex-1 gap-[6px] bg-[#171717]">
                <ProjectPanel />
                <CompPanel />
                <SidePanels />
            </main>
            <Timeline />
        </div>
    );
}
